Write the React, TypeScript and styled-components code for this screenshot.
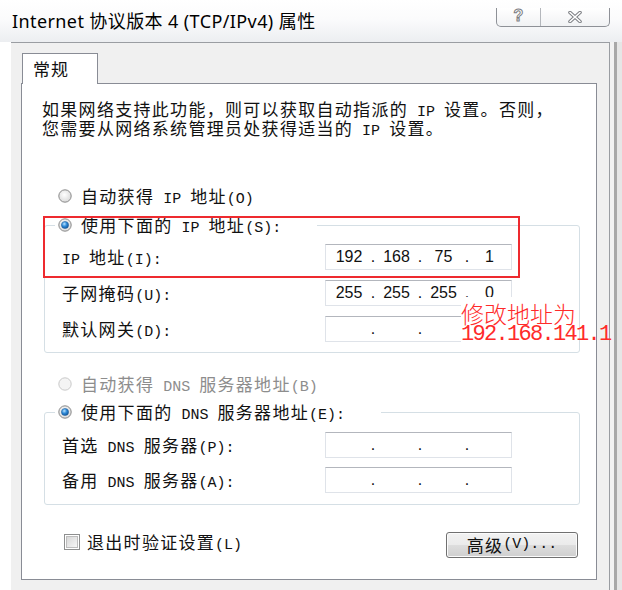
import React from "react";
import styled, { createGlobalStyle } from "styled-components";

const Global = createGlobalStyle`
  html, body { margin: 0; padding: 0; background: #ffffff; }
  body {
    width: 622px;
    height: 590px;
    overflow: hidden;
    font-family: "Noto Sans CJK SC", sans-serif;
    font-size: 17px;
    line-height: 20px;
    color: #111;
  }
  #root { width: 622px; height: 590px; }
  * { box-sizing: border-box; }
`;

const Window = styled.div`
  width: 622px;
  height: 590px;
  display: grid;
  grid-template-columns: 11px 599px 12px;
  grid-template-rows: 42px 548px;
  background: #ffffff;
`;

const TitleBar = styled.div`
  grid-column: 1 / 4;
  display: flex;
  justify-content: space-between;
  align-items: flex-start;
  padding: 0 12px;
  background: linear-gradient(180deg, #ffffff 0%, #fbfbfc 45%, #eceef1 100%);
`;

const TitleText = styled.div`
  margin-top: 9px;
  font-family: "Noto Sans", "Noto Sans CJK SC", sans-serif;
  font-size: 18px;
  letter-spacing: 0.4px;
  line-height: 24px;
  color: #000;
  white-space: nowrap;
`;

const CaptionGroup = styled.div`
  margin-top: 8px;
  display: flex;
  height: 19px;
  border: 1px solid #8e9197;
  border-top: none;
  border-radius: 0 0 5px 5px;
  overflow: hidden;
  background: linear-gradient(180deg, #ffffff 0%, #f1f2f4 100%);
`;

const CaptionButton = styled.div<{ $w: number; $sep?: boolean }>`
  width: ${(p) => p.$w}px;
  height: 100%;
  display: flex;
  align-items: center;
  justify-content: center;
  border-left: ${(p) => (p.$sep ? "1px solid #b4b7bc" : "none")};
`;

const HelpGlyph = styled.span`
  font-family: "Liberation Sans", sans-serif;
  font-weight: 700;
  font-size: 16px;
  line-height: 16px;
  color: #ffffff;
  -webkit-text-stroke: 1px #7d7f84;
  margin-top: -3px;
`;

const LeftGutter = styled.div`
  background: #ffffff;
`;

const Client = styled.div`
  background: #f0f0f0;
  border-top: 1px solid #9a9da2;
  border-right: 1px solid #9a9da2;
  padding: 10px 12px 10px 10px;
  display: flex;
  flex-direction: column;
`;

const RightFrame = styled.div`
  background: linear-gradient(90deg, #f2f2f2 0px, #f2f2f2 4px, #a8a8a8 4px, #a8a8a8 7px, #e6e6e6 7px, #e6e6e6 100%);
`;

const TabStrip = styled.div`
  height: 30px;
  display: flex;
  align-items: flex-end;
  padding-left: 1px;
`;

const Tab = styled.div`
  position: relative;
  z-index: 1;
  width: 76px;
  height: 31px;
  margin-bottom: -1px;
  background: #ffffff;
  border: 1px solid #898c95;
  border-bottom: none;
  padding: 4px 0 0 10px;
  line-height: 22px;
  letter-spacing: 1px;
`;

const Panel = styled.div`
  position: relative;
  flex: 1;
  background: #ffffff;
  border: 1px solid #898c95;
  display: flex;
  flex-direction: column;
`;

const Cjk = styled.span`
  font-family: "Noto Sans CJK SC", sans-serif;
  font-size: 17px;
  letter-spacing: 1.3px;
`;

const Latin = styled.span`
  font-family: "Liberation Mono", monospace;
  font-size: 15px;
  line-height: 12px;
  letter-spacing: 0;
  white-space: pre;
`;

const Mixed = ({ text }: { text: string }) => {
  const parts = text.match(/[\x20-\x7e]+|[^\x20-\x7e]+/g) || [];
  return (
    <>
      {parts.map((p, i) =>
        /^[\x20-\x7e]/.test(p) ? <Latin key={i}>{p}</Latin> : <Cjk key={i}>{p}</Cjk>
      )}
    </>
  );
};

const Desc = styled.div`
  margin: 15px 0 0 20px;
  display: flex;
  flex-direction: column;
`;

const DescLine = styled.div`
  height: 19px;
  line-height: 19px;
  white-space: nowrap;
`;

const OptionRow = styled.div<{ $top: number; $disabled?: boolean }>`
  margin-top: ${(p) => p.$top}px;
  height: 20px;
  padding-left: 36px;
  display: flex;
  align-items: center;
  gap: 9px;
  color: ${(p) => (p.$disabled ? "#8d8d8d" : "#111")};
  white-space: nowrap;
`;

const Group = styled.fieldset<{ $top: number; $pt: number; $pb: number }>`
  margin: ${(p) => p.$top}px 0 0 22px;
  width: 536px;
  border: 1px solid #d5dfe5;
  border-radius: 3px;
  padding: ${(p) => p.$pt}px 0 ${(p) => p.$pb}px 0;
  min-inline-size: 0;
`;

const Legend = styled.legend`
  margin-left: 10px;
  padding: 0 36px 0 3px;
  height: 20px;
  display: flex;
  align-items: center;
  gap: 9px;
  white-space: nowrap;
  color: #111;
`;

const RowStack = styled.div<{ $gap: number }>`
  display: flex;
  flex-direction: column;
  gap: ${(p) => p.$gap}px;
`;

const FieldRow = styled.div`
  display: grid;
  grid-template-columns: 263px 187px;
  align-items: center;
  height: 26px;
  padding-left: 17px;
  white-space: nowrap;
`;

const IpBox = styled.div`
  height: 26px;
  width: 187px;
  border: 1px solid #dfe3e9;
  border-top-color: #b3b6bd;
  background: #ffffff;
  display: grid;
  grid-template-columns: 46px 2px 45px 2px 45px 2px 1fr;
  align-items: center;
  font-family: "Liberation Sans", sans-serif;
  font-size: 16px;
  line-height: 24px;
  color: #111;
`;

const IpCell = styled.span`
  text-align: center;
`;

const IpDot = styled.span`
  display: flex;
  justify-content: center;
  overflow: visible;
  width: 2px;
`;

const BottomRow = styled.div`
  margin-top: 27px;
  height: 26px;
  padding: 0 18px 0 42px;
  display: flex;
  align-items: flex-start;
  justify-content: space-between;
`;

const CheckLabel = styled.div`
  height: 20px;
  display: flex;
  align-items: center;
  gap: 7px;
  white-space: nowrap;
`;

const Button = styled.div`
  width: 132px;
  height: 26px;
  border: 1px solid #707070;
  border-radius: 3px;
  background: linear-gradient(180deg, #f2f2f2 0%, #ebebeb 48%, #dddddd 52%, #cfcfcf 100%);
  box-shadow: inset 0 0 0 1px #fbfbfb;
  display: flex;
  align-items: center;
  justify-content: center;
  white-space: nowrap;
`;

const RedFrame = styled.div`
  position: absolute;
  left: 21px;
  top: 132px;
  width: 477px;
  height: 62px;
  border: 2px solid #ee2a2f;
  pointer-events: none;
`;

const Note = styled.div`
  position: absolute;
  left: 439px;
  top: 213px;
  width: 118px;
  padding-top: 5px;
  background: #ffffff;
  color: #ff2a2a;
  line-height: 22px;
  white-space: nowrap;
`;

const NoteCjk = styled.div`
  font-family: "Noto Sans CJK SC", sans-serif;
  font-size: 23px;
  font-weight: 300;
  line-height: 22px;
`;

const NoteNum = styled.div`
  font-family: "Liberation Mono", monospace;
  font-size: 22px;
  line-height: 22px;
  letter-spacing: -1.7px;
`;

const Radio = ({ checked, disabled }: { checked?: boolean; disabled?: boolean }) => (
  <svg width="14" height="14" viewBox="0 0 14 14" style={{ flex: "none" }}>
    <defs>
      <radialGradient id="rfill" cx="0.45" cy="0.4" r="0.7">
        <stop offset="0" stopColor="#ffffff" />
        <stop offset="1" stopColor="#d4d4d4" />
      </radialGradient>
      <radialGradient id="rdot" cx="0.4" cy="0.35" r="0.75">
        <stop offset="0" stopColor="#b9e3ff" />
        <stop offset="0.45" stopColor="#2f8ad8" />
        <stop offset="1" stopColor="#0b4a8c" />
      </radialGradient>
    </defs>
    <circle
      cx="7"
      cy="7"
      r="6.2"
      fill={disabled ? "#f4f4f4" : "url(#rfill)"}
      stroke={disabled ? "#c9c9c9" : "#8a8a8a"}
      strokeWidth="1"
    />
    {checked && <circle cx="7" cy="7" r="3.6" fill="url(#rdot)" stroke="#1c5a96" strokeWidth="0.5" />}
  </svg>
);

const Checkbox = () => (
  <svg width="16" height="16" viewBox="0 0 16 16" style={{ flex: "none" }}>
    <defs>
      <linearGradient id="cfill" x1="0" y1="0" x2="1" y2="1">
        <stop offset="0" stopColor="#d6d6d6" />
        <stop offset="1" stopColor="#f7f7f7" />
      </linearGradient>
    </defs>
    <rect x="0.5" y="0.5" width="15" height="15" fill="#ffffff" stroke="#8e8f8f" />
    <rect x="2.5" y="2.5" width="11" height="11" fill="url(#cfill)" stroke="#bdbdbd" />
  </svg>
);

const CloseGlyph = () => (
  <svg width="16" height="12" viewBox="0 0 16 12">
    <path d="M3 1.5 L13 10.5 M13 1.5 L3 10.5" stroke="#7d7f84" strokeWidth="3.6" strokeLinecap="round" />
    <path d="M3 1.5 L13 10.5 M13 1.5 L3 10.5" stroke="#ffffff" strokeWidth="1.6" strokeLinecap="round" />
  </svg>
);

const IpInput = ({ parts }: { parts: string[] }) => (
  <IpBox>
    <IpCell>{parts[0]}</IpCell>
    <IpDot>.</IpDot>
    <IpCell>{parts[1]}</IpCell>
    <IpDot>.</IpDot>
    <IpCell>{parts[2]}</IpCell>
    <IpDot>.</IpDot>
    <IpCell>{parts[3]}</IpCell>
  </IpBox>
);

const Field = ({ label, parts }: { label: string; parts: string[] }) => (
  <FieldRow>
    <span>
      <Mixed text={label} />
    </span>
    <IpInput parts={parts} />
  </FieldRow>
);

const empty = ["", "", "", ""];

export default function App() {
  return (
    <>
      <Global />
      <Window>
        <TitleBar>
          <TitleText>Internet 协议版本 4 (TCP/IPv4) 属性</TitleText>
          <CaptionGroup>
            <CaptionButton $w={43}>
              <HelpGlyph>?</HelpGlyph>
            </CaptionButton>
            <CaptionButton $w={69} $sep>
              <CloseGlyph />
            </CaptionButton>
          </CaptionGroup>
        </TitleBar>
        <LeftGutter />
        <Client>
          <TabStrip>
            <Tab>常规</Tab>
          </TabStrip>
          <Panel>
            <Desc>
              <DescLine>
                <Mixed text="如果网络支持此功能，则可以获取自动指派的 IP 设置。否则，" />
              </DescLine>
              <DescLine>
                <Mixed text="您需要从网络系统管理员处获得适当的 IP 设置。" />
              </DescLine>
            </Desc>

            <OptionRow $top={49}>
              <Radio />
              <span>
                <Mixed text="自动获得 IP 地址(O)" />
              </span>
            </OptionRow>

            <Group $top={9} $pt={9} $pb={10}>
              <Legend>
                <Radio checked />
                <span>
                  <Mixed text="使用下面的 IP 地址(S):" />
                </span>
              </Legend>
              <RowStack $gap={10}>
                <Field label="IP 地址(I):" parts={["192", "168", "75", "1"]} />
                <Field label="子网掩码(U):" parts={["255", "255", "255", "0"]} />
                <Field label="默认网关(D):" parts={empty} />
              </RowStack>
            </Group>

            <OptionRow $top={21} $disabled>
              <Radio disabled />
              <span>
                <Mixed text="自动获得 DNS 服务器地址(B)" />
              </span>
            </OptionRow>

            <Group $top={8} $pt={10} $pb={11}>
              <Legend>
                <Radio checked />
                <span>
                  <Mixed text="使用下面的 DNS 服务器地址(E):" />
                </span>
              </Legend>
              <RowStack $gap={9}>
                <Field label="首选 DNS 服务器(P):" parts={empty} />
                <Field label="备用 DNS 服务器(A):" parts={empty} />
              </RowStack>
            </Group>

            <BottomRow>
              <CheckLabel>
                <Checkbox />
                <span>
                  <Mixed text="退出时验证设置(L)" />
                </span>
              </CheckLabel>
              <Button>
                <Mixed text="高级(V)..." />
              </Button>
            </BottomRow>

            <RedFrame />
            <Note>
              <NoteCjk>修改地址为</NoteCjk>
              <NoteNum>192.168.141.1</NoteNum>
            </Note>
          </Panel>
        </Client>
        <RightFrame />
      </Window>
    </>
  );
}
